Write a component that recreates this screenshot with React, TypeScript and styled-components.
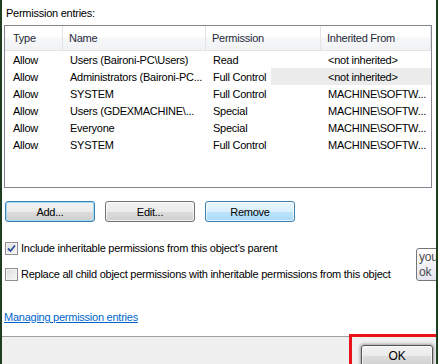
import styled, { createGlobalStyle, css } from 'styled-components';

const GlobalStyle = createGlobalStyle`
  html, body {
    margin: 0;
    padding: 0;
    background: #1c3a1c;
  }
`

const Frame = styled.div`
  width: 438px;
  height: 364px;
  overflow: hidden;
  background: #1f3d1f;
  display: flex;
  font-family: "Liberation Sans", Arial, sans-serif;
  font-size: 11px;
  letter-spacing: -0.25px;
  color: #000;
`

const Dialog = styled.div`
  position: relative;
  margin-left: 2px;
  width: 434px;
  height: 364px;
  display: flex;
  flex-direction: column;
  background: #fff;
  overflow: hidden;
`

const Body = styled.div`
  flex: 1;
  display: flex;
  flex-direction: column;
  padding: 6px 4px 0 2px;
`

const Caption = styled.div`
  padding-left: 2px;
  height: 19px;
  line-height: 15px;
`

const ListBox = styled.div`
  height: 161px;
  border: 1px solid #828790;
  display: flex;
  flex-direction: column;
`

const cols = '58px 143px 115px 1fr';

const HeaderRow = styled.div`
  display: grid;
  grid-template-columns: ${cols};
  height: 24px;
  background: linear-gradient(#ffffff, #ffffff 45%, #f6f7f8 50%, #f1f2f4);
  border-bottom: 1px solid #e3e4e6;
`

const HeaderCell = styled.div<{ $first?: boolean }>`
  display: flex;
  align-items: center;
  padding-left: ${p => (p.$first ? '8px' : '6px')};
  border-right: 1px solid #e2e3e5;
  color: #1e2a3a;
`

const Row = styled.div<{ $hover?: boolean }>`
  display: grid;
  grid-template-columns: ${cols};
  height: 17px;
  line-height: 15px;
  padding-top: 2px;
  box-sizing: border-box;
  ${p => p.$hover && css`
    background: linear-gradient(to right, transparent 266px, #ececec 266px);
  `}
`

const Cell = styled.div<{ $first?: boolean }>`
  padding-left: ${p => (p.$first ? '8px' : '7px')};
  white-space: nowrap;
  overflow: hidden;
`

const ButtonRow = styled.div`
  display: flex;
  gap: 10px;
  margin-top: 13px;
  padding-left: 1px;
`

const Button = styled.button<{ $variant?: 'focus' | 'hover' }>`
  width: 90px;
  height: 21px;
  padding: 0;
  font: inherit;
  letter-spacing: inherit;
  color: #000;
  border: 1px solid #707070;
  border-radius: 3px;
  background: linear-gradient(#f2f2f2, #ebebeb 50%, #dddddd 51%, #cfcfcf);
  box-shadow: inset 0 0 0 1px rgba(255, 255, 255, 0.7);
  ${p => p.$variant === 'focus' && css`
    border-color: #3c7fb1;
    box-shadow: inset 0 0 0 1px #9fdcf6;
  `}
  ${p => p.$variant === 'hover' && css`
    border-color: #3c7fb1;
    background: linear-gradient(#eaf6fd, #d9f0fc 50%, #bee6fd 51%, #a7d9f5);
  `}
`

const CheckRow = styled.label<{ $gap: number }>`
  display: flex;
  align-items: center;
  gap: 3px;
  height: 14px;
  padding-left: 1px;
  margin-top: ${p => p.$gap}px;
`

const Box = styled.span`
  width: 11px;
  height: 11px;
  border: 1px solid #8f8f8f;
  background: linear-gradient(135deg, #dcdcdc, #f8f8f8);
  box-shadow: inset 0 0 0 1px #f4f4f4;
  display: flex;
  align-items: center;
  justify-content: center;
`

const Link = styled.a`
  color: #0066cc;
  text-decoration: underline;
  margin-top: 30px;
  align-self: flex-start;
`

const Footer = styled.div`
  height: 27px;
  border-top: 1px solid #a0a0a0;
  background: #f0f0f0;
  display: flex;
  justify-content: flex-end;
  align-items: flex-start;
`

const Highlight = styled.div`
  margin-top: -3px;
  margin-right: -3px;
  width: 90px;
  height: 40px;
  border: 3px solid #e8141a;
  border-bottom: none;
  display: flex;
  justify-content: flex-end;
  padding-top: 8px;
  padding-right: 3px;
  box-sizing: border-box;
`

const OkButton = styled(Button)`
  width: 72px;
  height: 22px;
  border-color: #555;
  box-shadow: 0 0 3px 1px rgba(60, 60, 60, 0.45), inset 0 0 0 1px rgba(255, 255, 255, 0.7);
  font-size: 12px;
`

const Tooltip = styled.div`
  position: absolute;
  left: 414px;
  top: 248px;
  width: 40px;
  height: 33px;
  border: 1px solid #767676;
  border-radius: 3px;
  background: linear-gradient(#ffffff, #e4e5f0);
  padding: 1px 2px;
  line-height: 15px;
  font-size: 12px;
  color: #4c4c4c;
  box-sizing: border-box;
`

const entries = [
  ['Allow', 'Users (Baironi-PC\\Users)', 'Read', '<not inherited>'],
  ['Allow', 'Administrators (Baironi-PC...', 'Full Control', '<not inherited>'],
  ['Allow', 'SYSTEM', 'Full Control', 'MACHINE\\SOFTW...'],
  ['Allow', 'Users (GDEXMACHINE\\...', 'Special', 'MACHINE\\SOFTW...'],
  ['Allow', 'Everyone', 'Special', 'MACHINE\\SOFTW...'],
  ['Allow', 'SYSTEM', 'Full Control', 'MACHINE\\SOFTW...'],
];

const Check = () => (
  <svg width="9" height="9" viewBox="0 0 9 9">
    <path d="M1 4.5 L3.5 7 L8 1.5" fill="none" stroke="#2a4fa0" strokeWidth="1.8" />
  </svg>
);

export default function App() {
  return (
    <Frame>
      <GlobalStyle />
      <Dialog>
        <Body>
          <Caption>Permission entries:</Caption>
          <ListBox>
            <HeaderRow>
              <HeaderCell $first>Type</HeaderCell>
              <HeaderCell>Name</HeaderCell>
              <HeaderCell>Permission</HeaderCell>
              <HeaderCell>Inherited From</HeaderCell>
            </HeaderRow>
            {entries.map((e, i) => (
              <Row key={i} $hover={i === 1}>
                <Cell $first>{e[0]}</Cell>
                <Cell>{e[1]}</Cell>
                <Cell>{e[2]}</Cell>
                <Cell>{e[3]}</Cell>
              </Row>
            ))}
          </ListBox>
          <ButtonRow>
            <Button $variant="focus">Add...</Button>
            <Button>Edit...</Button>
            <Button $variant="hover">Remove</Button>
          </ButtonRow>
          <CheckRow $gap={19}>
            <Box><Check /></Box>
            Include inheritable permissions from this object's parent
          </CheckRow>
          <CheckRow $gap={12}>
            <Box />
            Replace all child object permissions with inheritable permissions from this object
          </CheckRow>
          <Link>Managing permission entries</Link>
        </Body>
        <Footer>
          <Highlight>
            <OkButton>OK</OkButton>
          </Highlight>
        </Footer>
        <Tooltip>you<br />ok</Tooltip>
      </Dialog>
    </Frame>
  );
}
